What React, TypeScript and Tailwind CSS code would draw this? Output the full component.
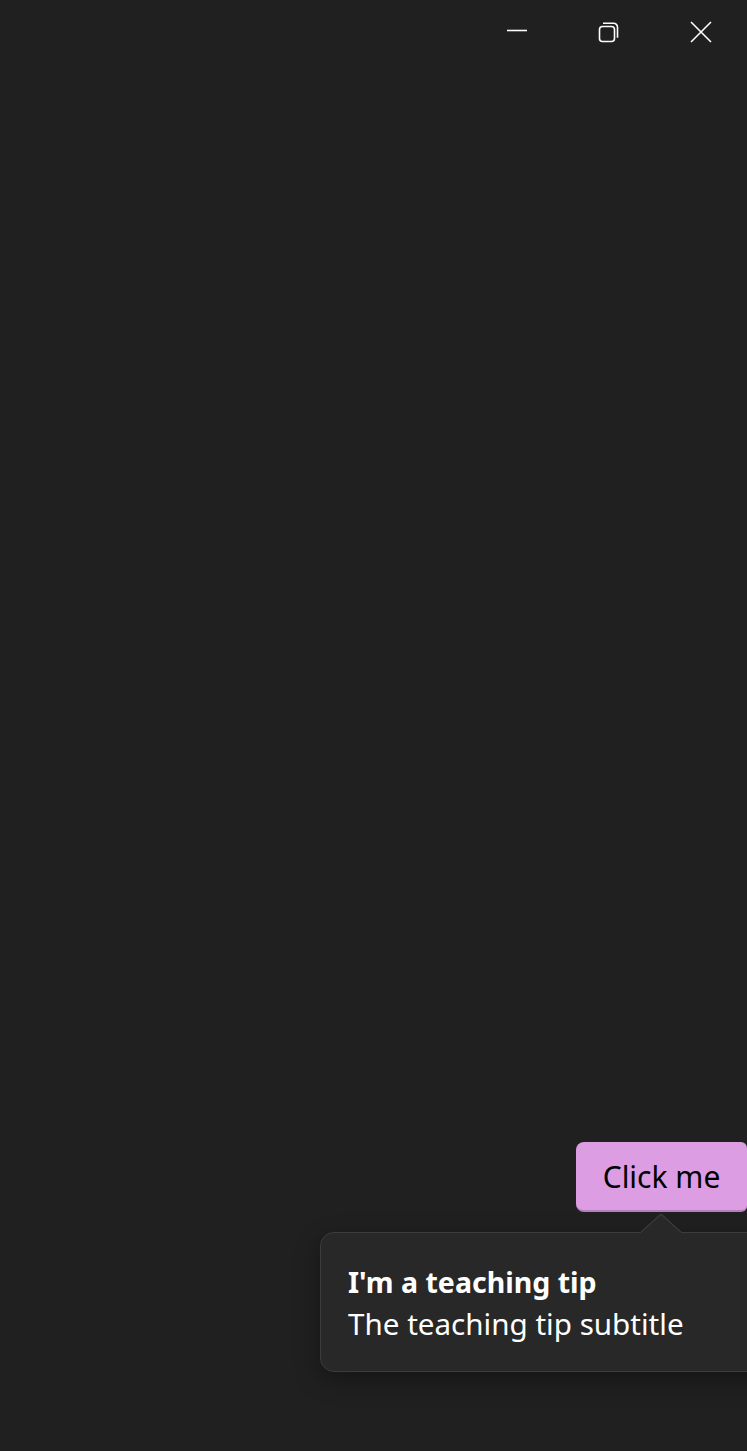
const font = { fontFamily: '"Noto Sans", "Open Sans", sans-serif' };

const CaptionButtons = () => (
  <div className="flex justify-end pt-[2px]">
    <button className="w-[92px] h-[60px] flex items-center justify-center">
      <svg width="22" height="22" viewBox="0 0 22 22" fill="none" stroke="#ffffff" strokeWidth="1.6">
        <path d="M1 9.5h20" />
      </svg>
    </button>
    <button className="w-[92px] h-[60px] flex items-center justify-center">
      <svg width="22" height="22" viewBox="0 0 22 22" fill="none" stroke="#ffffff" strokeWidth="1.6">
        <rect x="1.5" y="5.5" width="15" height="15" rx="3" />
        <path d="M5 2.2h10.5a4 4 0 0 1 4 4V16.8" />
      </svg>
    </button>
    <button className="w-[92px] h-[60px] flex items-center justify-center">
      <svg width="22" height="22" viewBox="0 0 22 22" fill="none" stroke="#ffffff" strokeWidth="1.6">
        <path d="M1 1l20 20M21 1L1 21" />
      </svg>
    </button>
  </div>
);

const TeachingTip = () => (
  <div className="absolute left-[320px] top-[1214px] w-[480px]">
    {/* beak pointing up at the button */}
    <svg className="absolute left-[320px] top-0" width="42" height="19" viewBox="0 0 42 19">
      <path d="M0 19L21 0L42 19" fill="#282828" stroke="#3c3c3c" strokeWidth="1.2" />
    </svg>
    <div className="mt-[18px] h-[140px] rounded-[14px] border border-[#3c3c3c] bg-[#282828] shadow-[0_8px_24px_rgba(0,0,0,0.35)] pl-[27px] pt-[28px]">
      <div className="text-[28.5px] leading-[42px] font-bold text-white">I'm a teaching tip</div>
      <div className="text-[29.6px] leading-[42px] text-white">The teaching tip subtitle</div>
    </div>
    {/* hide the border line under the beak */}
    <div className="absolute left-[321px] top-[18px] w-[40px] h-[2px] bg-[#282828]" />
  </div>
);

export default function App() {
  return (
    <div className="relative w-[747px] h-[1451px] bg-[#202020] overflow-hidden flex flex-col" style={font}>
      <CaptionButtons />
      <div className="flex-1" />
      <div className="flex justify-end mb-[239px]">
        <button className="w-[171px] h-[70px] rounded-l-[8px] rounded-r-[6px] bg-[#dc9de2] border-b-2 border-[#b57fbb] text-[30px] text-black">
          Click me
        </button>
      </div>
      <TeachingTip />
    </div>
  );
}
